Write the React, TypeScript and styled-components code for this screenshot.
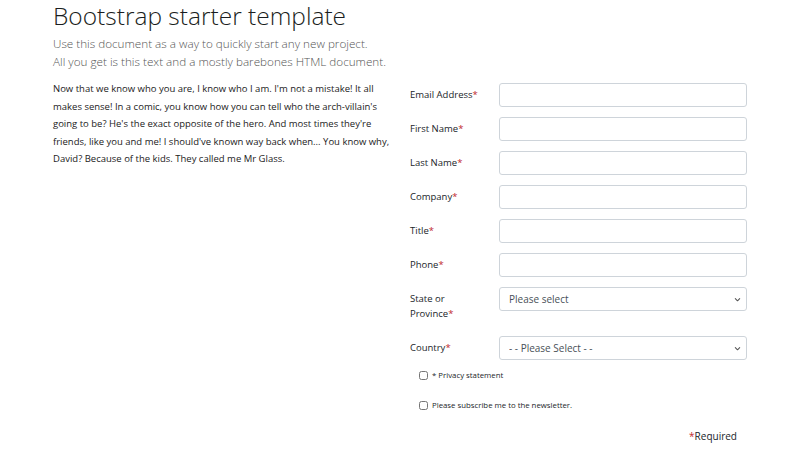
import styled, { createGlobalStyle } from "styled-components"
import { FC } from "react"

const GlobalStyle = createGlobalStyle`
  * { box-sizing: border-box; }
  body {
    margin: 0;
    background: #fff;
    color: #212529;
    font-family: "Open Sans", "Noto Sans", sans-serif;
  }
`

const chevron =
  "data:image/svg+xml,%3Csvg xmlns='http://www.w3.org/2000/svg' viewBox='0 0 16 16'%3E%3Cpath fill='none' stroke='%23555' stroke-width='2.4' stroke-linecap='round' stroke-linejoin='round' d='M3 6l5 5 5-5'/%3E%3C/svg%3E"

const fields = [
  { label: "Email Address" },
  { label: "First Name" },
  { label: "Last Name" },
  { label: "Company" },
  { label: "Title" },
  { label: "Phone" },
]

export const App: FC = () => {
  return (
    <Page>
      <GlobalStyle />
      <Title>Bootstrap starter template</Title>
      <Lead>
        Use this document as a way to quickly start any new project.
        <br />
        All you get is this text and a mostly barebones HTML document.
      </Lead>
      <Columns>
        <Text>
          Now that we know who you are, I know who I am. I'm not a mistake! It all makes sense! In a
          comic, you know how you can tell who the arch-villain's going to be? He's the exact opposite
          of the hero. And most times they're friends, like you and me! I should've known way back
          when... You know why, David? Because of the kids. They called me Mr Glass.
        </Text>
        <Form>
          {fields.map((f) => (
            <Row key={f.label}>
              <Label>
                {f.label}
                <Star>*</Star>
              </Label>
              <Input type="text" />
            </Row>
          ))}
          <Row $tall>
            <Label>
              State or
              <br />
              Province<Star>*</Star>
            </Label>
            <Select>
              <option>Please select</option>
            </Select>
          </Row>
          <Row>
            <Label>
              Country<Star>*</Star>
            </Label>
            <Select>
              <option>- - Please Select - -</option>
            </Select>
          </Row>
          <Checks>
            <Check>
              <Box type="checkbox" />
              <span>* Privacy statement</span>
            </Check>
            <Check>
              <Box type="checkbox" />
              <span>Please subscribe me to the newsletter.</span>
            </Check>
          </Checks>
          <Required>
            <Star>*</Star>Required
          </Required>
        </Form>
      </Columns>
    </Page>
  )
}

const Page = styled.div`
  padding: 0 53px;
  width: 800px;
`

const Title = styled.h1`
  margin: 0;
  padding-top: 0;
  font-size: 24.5px;
  font-weight: 300;
  line-height: 32px;
  color: #1a1d20;
`

const Lead = styled.p`
  margin: 2px 0 0;
  font-size: 11.7px;
  font-weight: 300;
  line-height: 18px;
  color: #555;
`

const Columns = styled.div`
  display: flex;
  gap: 17px;
  margin-top: 10px;
`

const Text = styled.p`
  margin: 0;
  width: 340px;
  font-size: 9.5px;
  line-height: 17.5px;
  color: #222;
`

const Form = styled.form`
  display: flex;
  flex-direction: column;
  width: 337px;
  margin-top: 3px;
`

const Row = styled.div<{ $tall?: boolean }>`
  display: flex;
  align-items: flex-start;
  height: ${(p) => (p.$tall ? "49px" : "34px")};
`

const Label = styled.label`
  width: 89px;
  flex-shrink: 0;
  padding-top: 4px;
  font-size: 9.5px;
  line-height: 15px;
  color: #212529;
`

const Star = styled.span`
  color: #c0272d;
`

const Input = styled.input`
  width: 248px;
  height: 24px;
  border: 1px solid #ced4da;
  border-radius: 3px;
  background: #fff;
  outline: none;
`

const Select = styled.select`
  appearance: none;
  width: 248px;
  height: 24px;
  border: 1px solid #ced4da;
  border-radius: 3px;
  background: #fff url("${chevron}") no-repeat right 5px center / 7px 7px;
  padding: 0 16px 0 9px;
  font-family: "Open Sans", "Noto Sans", sans-serif;
  font-size: 10px;
  color: #495057;
`

const Checks = styled.div`
  display: flex;
  flex-direction: column;
  margin-top: -10px;
`

const Check = styled.label`
  display: flex;
  align-items: center;
  gap: 4px;
  margin-left: 9px;
  height: 30px;
  font-size: 7.8px;
  color: #212529;
`

const Box = styled.input`
  margin: 0;
  width: 9px;
  height: 9px;
`

const Required = styled.div`
  align-self: flex-end;
  margin-right: 10px;
  margin-top: 9px;
  font-size: 10px;
  line-height: 15px;
  color: #212529;
`

export default App
